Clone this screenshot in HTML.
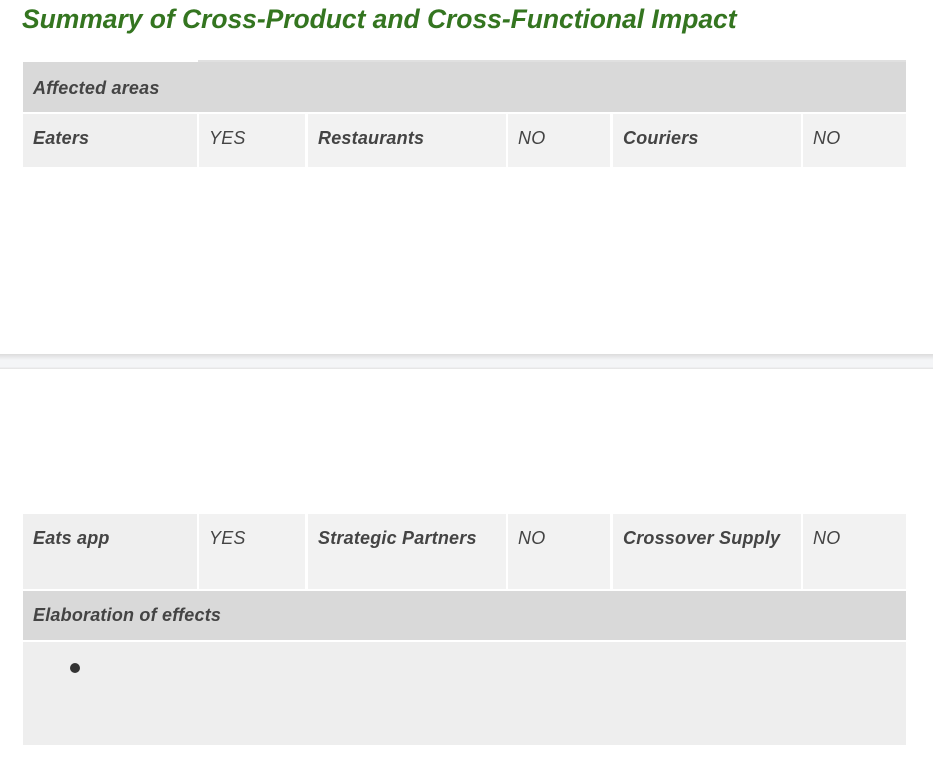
<!DOCTYPE html>
<html><head><meta charset="utf-8"><style>
body{margin:0;width:933px;height:760px;background:#fff;position:relative;overflow:hidden;font-family:"Liberation Sans",sans-serif;color:#444}
.a{position:absolute;box-sizing:border-box;padding-left:10px;font-size:18px;letter-spacing:0.2px;font-style:italic}
.h{background:#d9d9d9;font-weight:bold}
.l{background:#efefef;font-weight:bold}
.v{background:#f2f2f2}
.c{background:#f2f2f2;font-weight:bold}
h1{position:absolute;left:22px;top:4px;margin:0;font-size:26.5px;font-style:italic;font-weight:bold;color:#347520;letter-spacing:-0.05px}
</style></head><body>
<h1>Summary of Cross-Product and Cross-Functional Impact</h1>
<div class="a h" style="left:23px;top:62px;width:883px;height:50px;line-height:50px;border-top:1px solid #d9d9d9">Affected areas</div>
<div style="position:absolute;left:198px;top:60px;width:708px;height:2px;background:#e0e0e0"></div>

<div class="a l" style="left:23px;top:114px;width:174px;height:53px;line-height:48px">Eaters</div>
<div class="a v" style="left:199px;top:114px;width:106px;height:53px;line-height:48px">YES</div>
<div class="a c" style="left:308px;top:114px;width:198px;height:53px;line-height:48px">Restaurants</div>
<div class="a v" style="left:508px;top:114px;width:102px;height:53px;line-height:48px">NO</div>
<div class="a c" style="left:613px;top:114px;width:188px;height:53px;line-height:48px">Couriers</div>
<div class="a v" style="left:803px;top:114px;width:103px;height:53px;line-height:48px">NO</div>

<div style="position:absolute;left:0;top:354px;width:933px;height:15px;background:linear-gradient(#dcdcdc,#f4f5f7 40%,#f4f5f7 85%,#e2e2e2)"></div>

<div class="a l" style="left:23px;top:514px;width:174px;height:75px;line-height:48px">Eats app</div>
<div class="a v" style="left:199px;top:514px;width:106px;height:75px;line-height:48px">YES</div>
<div class="a c" style="left:308px;top:514px;width:198px;height:75px;line-height:48px">Strategic Partners</div>
<div class="a v" style="left:508px;top:514px;width:102px;height:75px;line-height:48px">NO</div>
<div class="a c" style="left:613px;top:514px;width:188px;height:75px;line-height:48px">Crossover Supply</div>
<div class="a v" style="left:803px;top:514px;width:103px;height:75px;line-height:48px">NO</div>

<div class="a h" style="left:23px;top:591px;width:883px;height:49px;line-height:48px">Elaboration of effects</div>
<div style="position:absolute;left:23px;top:642px;width:883px;height:103px;background:#eeeeee"></div>
<div style="position:absolute;left:70px;top:663px;width:10px;height:10px;border-radius:50%;background:#333"></div>
</body></html>
